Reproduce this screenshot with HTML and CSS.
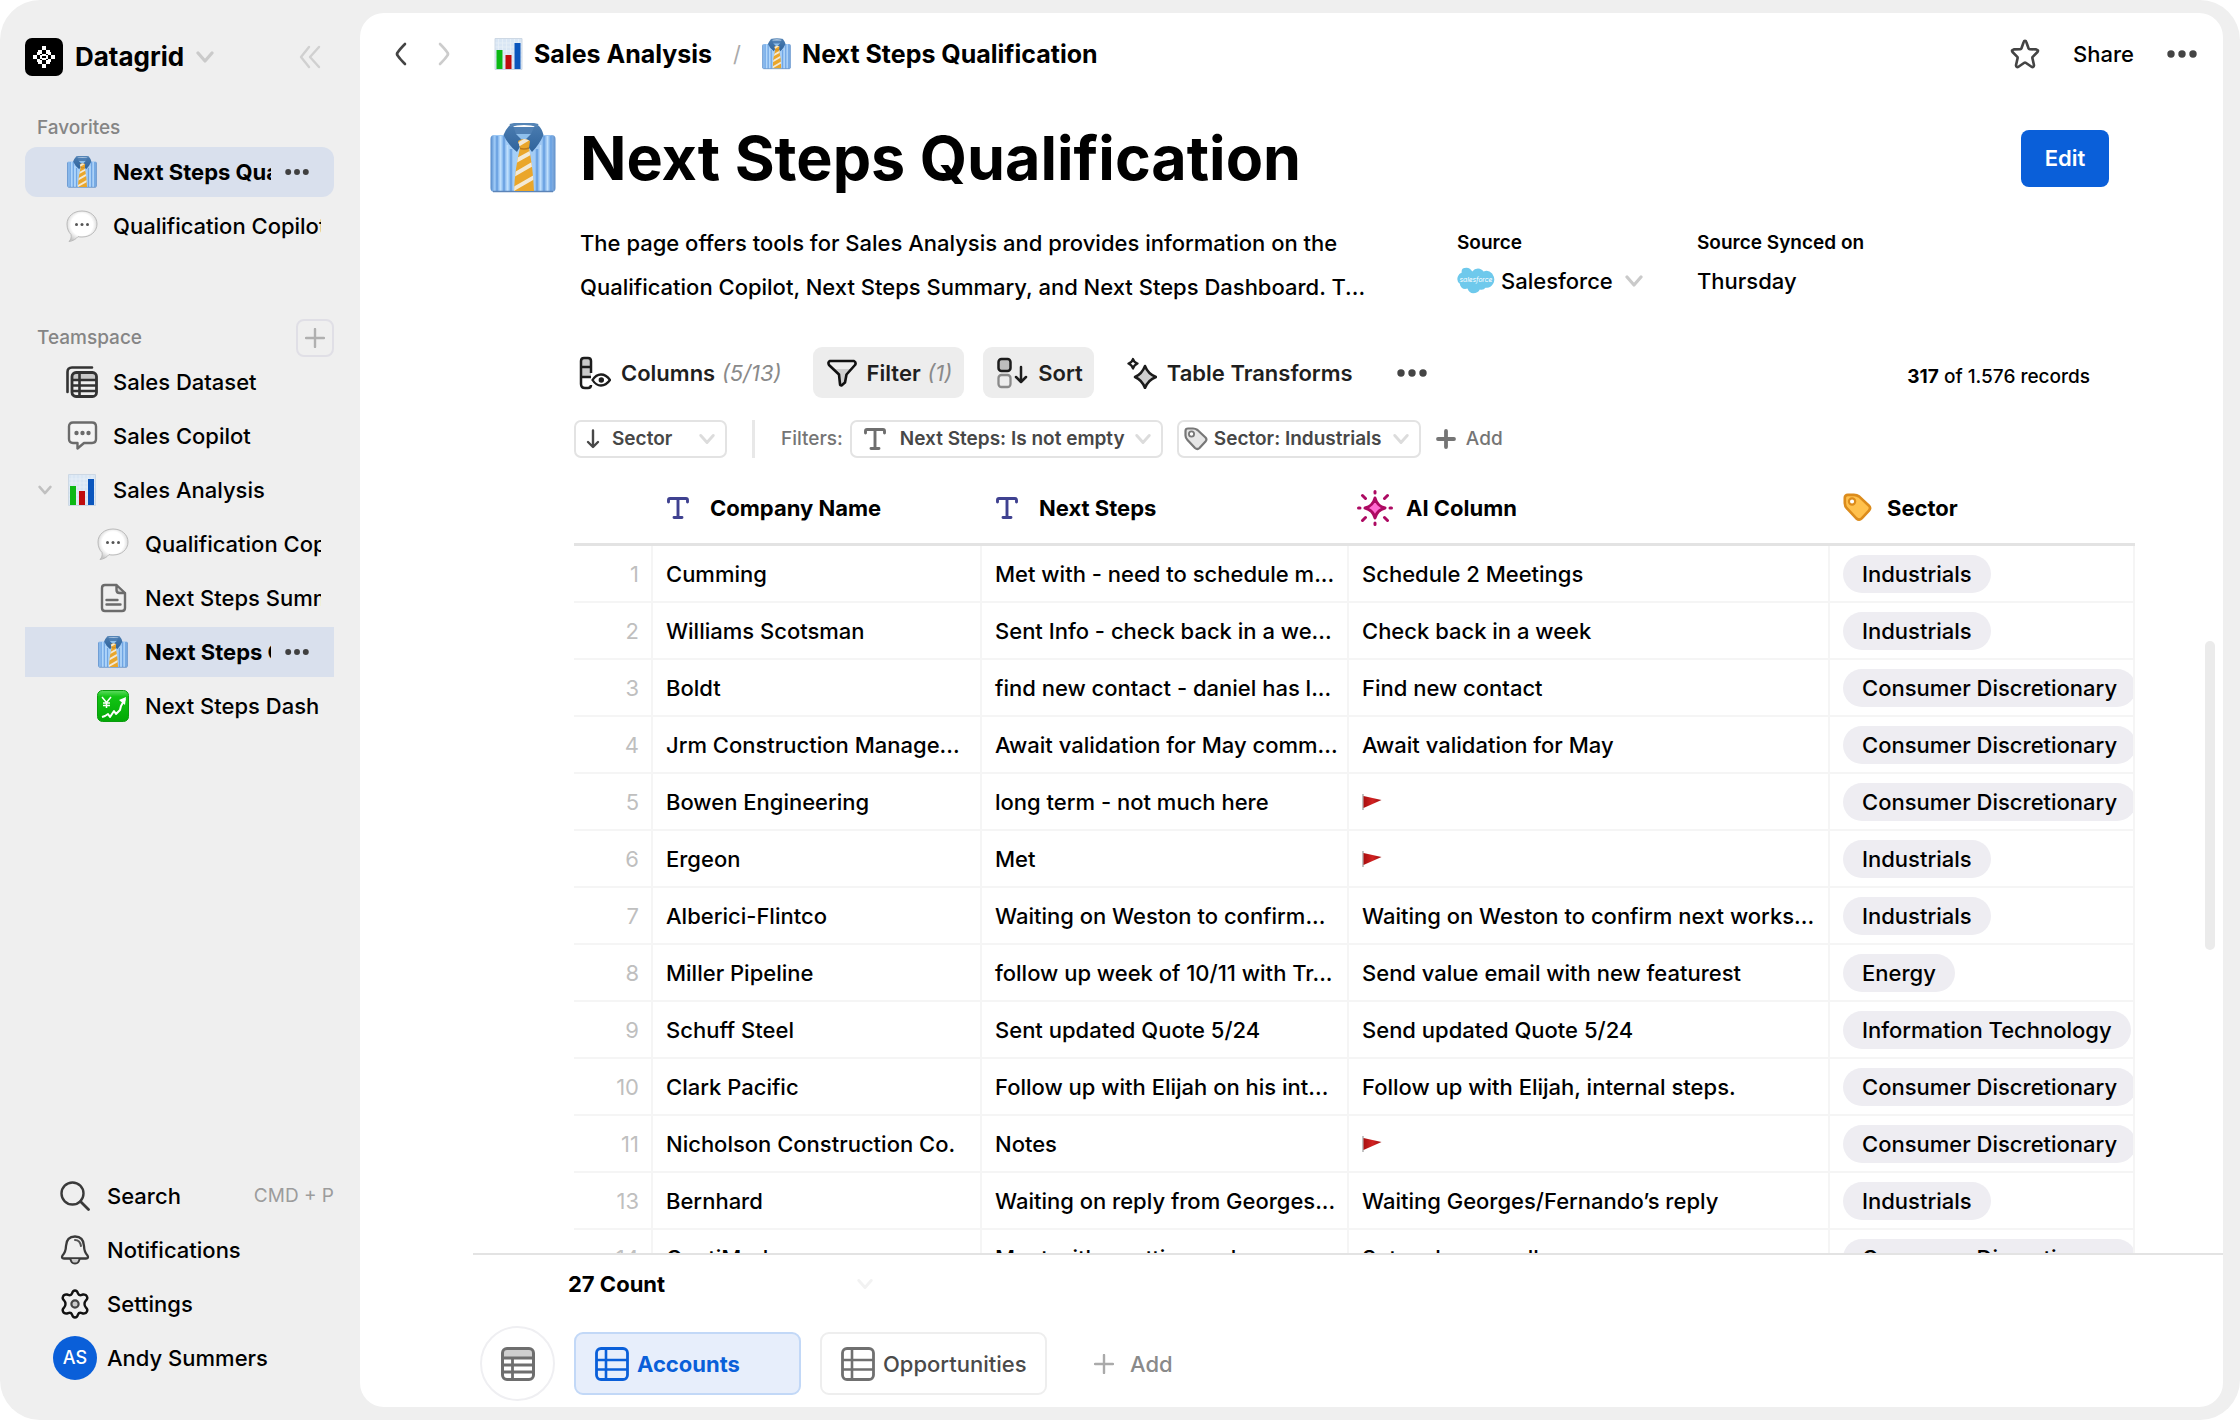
FILE: index.html
```html
<!DOCTYPE html>
<html lang="en">
<head>
<meta charset="utf-8">
<title>Next Steps Qualification – Datagrid</title>
<link rel="stylesheet" href="styles.css">
</head>
<body>
<svg class="sprite" aria-hidden="true">
  <defs>
    <linearGradient id="cloth" x1="0" x2="1" y1="0" y2="0"><stop offset="0" stop-color="#4f86c8"/><stop offset=".06" stop-color="#9cc8f5"/><stop offset=".5" stop-color="#a9d2f9"/><stop offset=".92" stop-color="#98c2f0"/><stop offset="1" stop-color="#5f8fc9"/></linearGradient>
    <linearGradient id="collar" x1="0" x2="0" y1="0" y2="1"><stop offset="0" stop-color="#4a7cb0"/><stop offset="1" stop-color="#2f639c"/></linearGradient>
    <radialGradient id="bubble" cx=".5" cy=".45" r=".6"><stop offset=".6" stop-color="#fff"/><stop offset="1" stop-color="#c4c4c4"/></radialGradient>
    <linearGradient id="money" x1="0" x2="0" y1="0" y2="1"><stop offset="0" stop-color="#5fdc62"/><stop offset=".2" stop-color="#12c414"/><stop offset="1" stop-color="#02a806"/></linearGradient>
    <linearGradient id="flag" x1="0" x2="1" y1="0" y2="0"><stop offset="0" stop-color="#a80f0f"/><stop offset=".5" stop-color="#d02222"/><stop offset="1" stop-color="#a01010"/></linearGradient>
    <clipPath id="tie-shape"><path d="M28 18q6-4 12 0l-1 7q4 20 5 43H24q1-23 6-43z"/></clipPath>
  </defs>
  <symbol id="shirt" viewBox="0 0 66 70">
    <rect x=".5" y="12" width="65" height="57" rx="4" fill="url(#cloth)"/>
    <path d="M7 13v55M14 13v55M21 26v42M47 26v42M54 13v55M61 13v55" stroke="#6fa5e3" stroke-width="2.600"/>
    <path d="M10.500 13v55M57.500 13v55M50.500 22v46M17.500 22v46" stroke="#bfdffc" stroke-width="1.600"/>
    <path d="M3 68.500h60" stroke="#5b84b8" stroke-width="1.400"/>
    <path d="M22 4h24l-6 16H28z" fill="#8fc0ec"/>
    <path d="M22 4h24l-3 7H25z" fill="#4f80b4"/>
    <path d="M19 3q2-2 4-1l3 9 7 7-6 11Q18 22 13.500 12 16 6 19 3zM49 3q-2-2-4-1l-4 9-7 7 8 11q7-7 11.500-17Q52 6 49 3z" fill="url(#collar)"/>
    <path d="M20 2.500Q34-1.500 48 2.500" stroke="#5585b6" stroke-width="3" fill="none"/>
    <g clip-path="url(#tie-shape)">
      <path d="M20 14h28v56H20z" fill="#eaa62a"/>
      <path d="M26 23l15-9M22 40l20-11M20 54l26-15M20 68l28-16" stroke="#f2e9d6" stroke-width="4"/>
      <path d="M29 25q5 2 10 0" stroke="#b9791b" stroke-width="1.400" fill="none"/>
    </g>
  </symbol>
  <symbol id="chart" viewBox="0 0 28 32">
    <path d="M.5.5h27v31H.5z" fill="#d9e6f4" stroke="#cdd8e4"/>
    <path d="M4 1v30M8 1v30M12 1v30M16 1v30M20 1v30M24 1v30M1 5h26M1 9h26M1 13h26M1 17h26M1 21h26M1 25h26" stroke="#e8f0f8" stroke-width=".8"/>
    <path d="M2 12h6v19H2z" fill="#0cb814"/><path d="M11 17h6v14h-6z" fill="#c00d0d"/><path d="M20 5h6v26h-6z" fill="#0b56bd"/>
  </symbol>
  <symbol id="chat-bubble" viewBox="0 0 32 32">
    <path d="M16 1c8.500 0 15 5.500 15 13S24.500 27 16 27c-1.500 0-3 0-4-.4C10 29 7 31 3 31.500c2-2 2.600-4.500 2-7C2.500 22 1 18.500 1 14 1 6.500 7.500 1 16 1z" fill="url(#bubble)" stroke="#bababa"/>
    <circle cx="10.500" cy="14.500" r="1.500" fill="#555"/><circle cx="16" cy="14.500" r="1.500" fill="#555"/><circle cx="21.500" cy="14.500" r="1.500" fill="#555"/>
  </symbol>
  <symbol id="yen-chart" viewBox="0 0 32 32">
    <rect x=".5" y=".5" width="31" height="31" rx="5" fill="url(#money)" stroke="#0a9c0d"/>
    <path d="M5 7l4.500 5.500L14 7M9.500 12v6M6 13h7M6 15.500h7" fill="none" stroke="#fff" stroke-width="1.500"/>
    <path d="M5 27l3-1 3-2 2 3 4-6 2 3 4-4 1-4 4-7" fill="none" stroke="#fff" stroke-width="2" stroke-linejoin="round"/><path d="M22 10l7-3-1 8z" fill="#fff"/>
  </symbol>
  <symbol id="logo" viewBox="0 0 38 38">
    <rect width="38" height="38" rx="7" fill="#000"/>
    <path d="M17 8h4v4h-4zM13 12h4v4h-4zM21 12h4v4h-4zM17 16h4v2h-4zM8 17h4v4H8zM26 17h4v4h-4zM12 14h3v3h-3zM23 14h3v3h-3zM12 21h3v3h-3zM23 21h3v3h-3zM15 17h2v4h-2zM21 17h2v4h-2zM17 20h4v2h-4zM13 22h4v4h-4zM21 22h4v4h-4zM17 26h4v4h-4z" fill="#fff"/>
  </symbol>
  <symbol id="chev-down" viewBox="0 0 18 12"><path d="M2 2l7 8 7-8" fill="none" stroke="currentColor" stroke-width="3.200" stroke-linecap="round" stroke-linejoin="round"/></symbol>
  <symbol id="collapse" viewBox="0 0 22 24"><path d="M10 2L2 12l8 10M20 2l-9 10 9 10" fill="none" stroke="currentColor" stroke-width="2.400" stroke-linecap="round" stroke-linejoin="round"/></symbol>
  <symbol id="chev-left" viewBox="0 0 14 24"><path d="M11 2Q6 7 4 10q-2 2 0 4 2 3 7 8" fill="none" stroke="currentColor" stroke-width="2.600" stroke-linecap="round"/></symbol>
  <symbol id="chev-right" viewBox="0 0 14 24"><path d="M3 2q5 5 7 8 2 2 0 4-2 3-7 8" fill="none" stroke="currentColor" stroke-width="2.600" stroke-linecap="round"/></symbol>
  <symbol id="dots" viewBox="0 0 30 8"><circle cx="4" cy="4" r="3.700"/><circle cx="15" cy="4" r="3.700"/><circle cx="26" cy="4" r="3.700"/></symbol>
  <symbol id="plus" viewBox="0 0 20 20"><path d="M10 1v18M1 10h18" stroke="currentColor" stroke-width="2.400" stroke-linecap="round"/></symbol>
  <symbol id="plus-bold" viewBox="0 0 20 20"><path d="M10 2v16M2 10h16" stroke="currentColor" stroke-width="3.800" stroke-linecap="round"/></symbol>
  <symbol id="dataset" viewBox="0 0 32 32"><path d="M1.500 26V6q0-4.500 4.500-4.500h20" fill="none" stroke="#333" stroke-width="2.600" stroke-linecap="round"/><path d="M6 11q0-4 4-4h16q4 0 4 4v3H6z" fill="#c9c9c9"/><rect x="6" y="6.500" width="24.500" height="24" rx="4" fill="none" stroke="#333" stroke-width="2.800"/><path d="M6 14h24M6 19.500h24M6 25h24M13.500 7v23" stroke="#333" stroke-width="2.600"/></symbol>
  <symbol id="chat" viewBox="0 0 32 32"><path d="M7 2.500h19q4 0 4 4V19q0 4-4 4H18l-6.500 5.500V23H7q-4 0-4-4V6.500q0-4 4-4z" fill="#f4f4f4" stroke="#6b6b6b" stroke-width="2.400" stroke-linejoin="round"/><circle cx="10.500" cy="13" r="2.200" fill="#6b6b6b"/><circle cx="16.500" cy="13" r="2.200" fill="#6b6b6b"/><circle cx="22.500" cy="13" r="2.200" fill="#6b6b6b"/></symbol>
  <symbol id="doc" viewBox="0 0 32 32"><path d="M19.500 3v5q0 3 3 3H28z" fill="#d4d4d4"/><path d="M8 3h11.500L28 11v15q0 3-3 3H8q-3 0-3-3V6q0-3 3-3zM19.500 3v5q0 3 3 3H28M9.500 18h11M9.500 22.500h14" fill="none" stroke="#6b6b6b" stroke-width="2.400" stroke-linejoin="round" stroke-linecap="round"/></symbol>
  <symbol id="search" viewBox="0 0 30 30"><circle cx="12.500" cy="12.500" r="11" fill="none" stroke="#3a3a3a" stroke-width="2.400"/><path d="M20.500 20.500l8 8" stroke="#3a3a3a" stroke-width="2.800" stroke-linecap="round"/></symbol>
  <symbol id="bell" viewBox="0 0 30 30"><path d="M15 1.500q8.500 0 9 9.500.2 6 3.500 9.500 1.500 3-1.500 3H4q-3 0-1.500-3Q5.800 17 6 11q.5-9.500 9-9.500z" fill="none" stroke="#3a3a3a" stroke-width="2.300" stroke-linejoin="round"/><path d="M15 5q5 0 6 6" fill="none" stroke="#555" stroke-width="2" stroke-linecap="round"/><path d="M10.500 24q.5 4.500 4.500 4.500t4.500-4.500" fill="#c9c9c9" stroke="#3a3a3a" stroke-width="2"/></symbol>
  <symbol id="gear" viewBox="0 0 30 30"><path d="M12 4.500q.8-3 3-3t3 3q.8 2 3 1.600l2-.6q3-.4 4 2 1 2-1 3.800-1.500 1.700-1.500 3.700t1.500 3.700q2 1.800 1 3.800-1 2.400-4 2l-2-.6q-2.200-.4-3 1.600-.8 3-3 3t-3-3q-.8-2-3-1.600l-2 .6q-3 .4-4-2-1-2 1-3.800Q5.500 17 5.500 15T4 11.300q-2-1.800-1-3.800 1-2.400 4-2l2 .6q2.200.4 3-1.600z" fill="none" stroke="#111" stroke-width="2.400" stroke-linejoin="round"/><circle cx="15" cy="15" r="3.600" fill="#ccc" stroke="#444" stroke-width="2.200"/></symbol>
  <symbol id="star" viewBox="0 0 30 30"><path d="M15 1.800q1 0 1.400 1.400l2.200 6.300q.3.700 1 .7l6.700.2q2.600.6 1.200 2.600l-4.800 4.800q-.5.600-.3 1.300l1.600 7.200q-.2 2.500-2.500 1.500l-5.800-4q-.7-.5-1.400 0l-5.800 4q-2.300 1-2.500-1.500l1.600-7.200q.2-.7-.3-1.300L2.500 13q-1.400-2 1.200-2.600l6.700-.2q.7 0 1-.7l2.200-6.300Q14 1.800 15 1.800z" fill="none" stroke="#444" stroke-width="2.600" stroke-linejoin="round"/></symbol>
  <symbol id="salesforce" viewBox="0 0 40 28"><path d="M16 4q3-4 8-3 3 1 4 3 5-2 9 2 4 6 1 11-3 5-8 4-2 3-6 2-2 4-7 4-4 0-6-5-4 1-6-1-2-2-2-4-4-3-2-8 1-3 4-4Q4 0 10 0q4 0 6 4z" fill="#6ec9ec"/><text class="sf-word" x="20" y="15" text-anchor="middle">salesforce</text></symbol>
  <symbol id="columns" viewBox="0 0 32 34"><path d="M2 11h10v11H2z" fill="#c9c9c9"/><path d="M2 5q0-3 3-3h4q3 0 3 3v5H2z" fill="#c9c9c9"/><path d="M12 17V5q0-3-3-3H5Q2 2 2 5v23q0 4 4 4h3q3 0 3-3M2 11h10M2 21h10" fill="none" stroke="#1c1c1c" stroke-width="2.500"/><path d="M13.500 24q3.500-5.500 8.500-5.500t9 5.500q-4 5.500-9 5.500t-8.500-5.500z" fill="#fff" stroke="#1c1c1c" stroke-width="2.300"/><circle cx="22.300" cy="24" r="2.700" fill="#1c1c1c"/></symbol>
  <symbol id="filter" viewBox="0 0 30 28"><path d="M6 10h18l-5 6-2 8-3 1-1-9z" fill="#cfcfcf"/><path d="M3 2h24q2.500 1.500 1 4l-8.500 9.500-1.500 8-3.500 3q-1.500 0-1.500-1.500l-1-9.500L2 6q-1.500-3 1-4z" fill="none" stroke="#111" stroke-width="2.600" stroke-linejoin="round"/></symbol>
  <symbol id="sort" viewBox="0 0 31 32"><rect x="1.500" y="2" width="12" height="12" rx="3" fill="#bdbdbd" stroke="#1c1c1c" stroke-width="2.500"/><rect x="1.500" y="18" width="12" height="12" rx="3" fill="none" stroke="#8a8a8a" stroke-width="2.300"/><path d="M24 10v14M19 20l5 5 5-5" fill="none" stroke="#1c1c1c" stroke-width="2.500" stroke-linecap="round" stroke-linejoin="round"/></symbol>
  <symbol id="sparkle" viewBox="0 0 30 32"><path d="M18 9q3 8 11 11-8 3-11 11-3-8-10-11 7-3 10-11z" fill="#cfcfcf" stroke="#1c1c1c" stroke-width="2.500" stroke-linejoin="round"/><path d="M6 2q1 3.500 4.500 4.500Q7 8 6 11.500 5 8 1.500 6.500 5 5.500 6 2z" fill="#fff" stroke="#1c1c1c" stroke-width="2.300" stroke-linejoin="round"/></symbol>
  <symbol id="arrow-down" viewBox="0 0 14 20"><path d="M7 1.500v16M2 13l5 5 5-5" fill="none" stroke="currentColor" stroke-width="2.400" stroke-linecap="round" stroke-linejoin="round"/></symbol>
  <symbol id="text-type" viewBox="0 0 22 22"><path d="M1.500 5V3q0-1.500 1.500-1.500h16q1.500 0 1.500 1.500v2M11 2v18M7 20.500h8" fill="none" stroke="currentColor" stroke-width="2.900" stroke-linecap="round"/></symbol>
  <symbol id="tag" viewBox="0 0 24 24"><path d="M4 1.500h5q2.500 0 4.500 1.500l8 7.500q1.800 2 0 4l-6 6.500q-2 2-4.500 0l-7.500-8Q1.500 11 1.500 8.500V4q0-2.500 2.500-2.500z" fill="var(--tag-fill)" stroke="var(--tag-line)" stroke-width="2.200" stroke-linejoin="round"/><circle cx="7.500" cy="7" r="2.600" fill="#fff" stroke="var(--tag-line)" stroke-width="1.800"/></symbol>
  <symbol id="ai" viewBox="0 0 36 36"><path d="M18 8q2 8 10 10-8 2-10 10-2-8-10-10 8-2 10-10z" fill="#ff6bd0" stroke="#ad0a62" stroke-width="3" stroke-linejoin="round"/><path d="M18 1.500v1.500M18 33v1.500M1.500 18H3M33 18h1.500M5.500 5.500l3 3M30.500 5.500l-3 3M5.500 30.500l3-3M30.500 30.500l-3-3" stroke="#ad0a62" stroke-width="3" stroke-linecap="round"/></symbol>
  <symbol id="table-grid" viewBox="0 0 34 34"><path d="M2 13h30M2 22.500h30M11 2v30" stroke="currentColor" stroke-width="2.600"/><rect x="1.500" y="1.500" width="31" height="31" rx="4.500" fill="none" stroke="currentColor" stroke-width="2.800"/></symbol>
  <symbol id="table-list" viewBox="0 0 34 34"><path d="M3 3h28v7H3z" fill="#cfcfcf"/><path d="M2 11h30M2 18h30M2 25h30M11.500 11v21" stroke="currentColor" stroke-width="2.800"/><rect x="1.500" y="1.500" width="31" height="31" rx="4.500" fill="none" stroke="currentColor" stroke-width="3"/></symbol>
  <symbol id="red-flag" viewBox="0 0 20 18"><path d="M1 1v16" stroke="#9a9a9a" stroke-width="1.200"/><path d="M1.500 3q9 2 18 4-9 4-18 8z" fill="url(#flag)"/></symbol>
</svg>

<div class="app">
  <aside class="sidebar">
    <div class="brand">
      <svg class="brand-logo"><use href="#logo"/></svg>
      <button class="brand-name" type="button">Datagrid <svg class="chev"><use href="#chev-down"/></svg></button>
      <button class="collapse" type="button" aria-label="Collapse sidebar"><svg><use href="#collapse"/></svg></button>
    </div>

    <nav class="favorites">
      <h2 class="group-title">Favorites</h2>
      <div class="nav-item rounded selected">
        <svg class="nav-icon"><use href="#shirt"/></svg>
        <a href="#">Next Steps Qualification</a>
        <button class="more" type="button" aria-label="More"><svg><use href="#dots"/></svg></button>
      </div>
      <div class="nav-item">
        <svg class="nav-icon"><use href="#chat-bubble"/></svg>
        <a href="#">Qualification Copilot</a>
      </div>
    </nav>

    <nav class="teamspace">
      <div class="group-head">
        <h2 class="group-title">Teamspace</h2>
        <button class="add-space" type="button" aria-label="Add"><svg><use href="#plus"/></svg></button>
      </div>
      <div class="nav-item"><svg class="nav-icon"><use href="#dataset"/></svg><a href="#">Sales Dataset</a></div>
      <div class="nav-item"><svg class="nav-icon"><use href="#chat"/></svg><a href="#">Sales Copilot</a></div>
      <div class="nav-item open"><svg class="twist"><use href="#chev-down"/></svg><svg class="nav-icon"><use href="#chart"/></svg><a href="#">Sales Analysis</a></div>
      <div class="nav-item child"><svg class="nav-icon"><use href="#chat-bubble"/></svg><a href="#">Qualification Copilot</a></div>
      <div class="nav-item child"><svg class="nav-icon"><use href="#doc"/></svg><a href="#">Next Steps Summary</a></div>
      <div class="nav-item child selected">
        <svg class="nav-icon"><use href="#shirt"/></svg>
        <a href="#">Next Steps Qualification</a>
        <button class="more" type="button" aria-label="More"><svg><use href="#dots"/></svg></button>
      </div>
      <div class="nav-item child"><svg class="nav-icon"><use href="#yen-chart"/></svg><a href="#">Next Steps Dash</a></div>
    </nav>

    <nav class="utility">
      <a href="#"><svg><use href="#search"/></svg>Search<kbd>CMD + P</kbd></a>
      <a href="#"><svg><use href="#bell"/></svg>Notifications</a>
      <a href="#"><svg><use href="#gear"/></svg>Settings</a>
      <a href="#"><span class="avatar">AS</span>Andy Summers</a>
    </nav>
  </aside>

  <main class="panel">
    <header class="topbar">
      <div class="history">
        <button type="button" aria-label="Back"><svg><use href="#chev-left"/></svg></button>
        <button class="disabled" type="button" aria-label="Forward"><svg><use href="#chev-right"/></svg></button>
      </div>
      <nav class="crumbs">
        <a href="#"><svg><use href="#chart"/></svg>Sales Analysis</a>
        <span class="slash">/</span>
        <a href="#"><svg><use href="#shirt"/></svg>Next Steps Qualification</a>
      </nav>
      <div class="top-actions">
        <button type="button" aria-label="Favorite"><svg class="star"><use href="#star"/></svg></button>
        <button type="button">Share</button>
        <button type="button" aria-label="More"><svg class="dots"><use href="#dots"/></svg></button>
      </div>
    </header>

    <div class="title-row">
      <svg class="title-icon"><use href="#shirt"/></svg>
      <h1>Next Steps Qualification</h1>
      <button class="edit" type="button">Edit</button>
    </div>

    <div class="about">
      <p>The page offers tools for Sales Analysis and provides information on the<br>Qualification Copilot, Next Steps Summary, and Next Steps Dashboard. T...</p>
      <dl class="source">
        <dt>Source</dt>
        <dd><button type="button"><svg class="sf"><use href="#salesforce"/></svg>Salesforce<svg class="chev"><use href="#chev-down"/></svg></button></dd>
      </dl>
      <dl>
        <dt>Source Synced on</dt>
        <dd>Thursday</dd>
      </dl>
    </div>

    <div class="toolbar">
      <button class="tool" type="button"><svg class="i-columns"><use href="#columns"/></svg>Columns <em>(5/13)</em></button>
      <button class="tool on" type="button"><svg class="i-filter"><use href="#filter"/></svg>Filter <em>(1)</em></button>
      <button class="tool on" type="button"><svg class="i-sort"><use href="#sort"/></svg>Sort</button>
      <button class="tool transforms" type="button"><svg class="i-sparkle"><use href="#sparkle"/></svg>Table Transforms</button>
      <button class="tool-more" type="button" aria-label="More"><svg class="dots"><use href="#dots"/></svg></button>
      <p class="records"><b>317</b> of 1.576 records</p>
    </div>

    <div class="filters">
      <button class="chip sort-chip" type="button"><svg class="i-arrow"><use href="#arrow-down"/></svg><span>Sector</span><svg class="chev"><use href="#chev-down"/></svg></button>
      <span class="divider"></span>
      <span class="filters-label">Filters:</span>
      <button class="chip text-chip" type="button"><svg class="i-type"><use href="#text-type"/></svg><span>Next Steps: Is not empty</span><svg class="chev"><use href="#chev-down"/></svg></button>
      <button class="chip tag-chip" type="button"><svg class="i-tag"><use href="#tag"/></svg><span>Sector: Industrials</span><svg class="chev"><use href="#chev-down"/></svg></button>
      <button class="add-filter" type="button"><svg><use href="#plus-bold"/></svg>Add</button>
    </div>

    <div class="table-area">
      <table>
        <colgroup><col class="c-num"><col class="c-company"><col class="c-next"><col class="c-ai"><col></colgroup>
        <thead>
          <tr>
            <th></th>
            <th><span class="head"><svg class="h-type"><use href="#text-type"/></svg>Company Name</span></th>
            <th><span class="head"><svg class="h-type"><use href="#text-type"/></svg>Next Steps</span></th>
            <th><span class="head head-ai"><svg class="h-ai"><use href="#ai"/></svg>AI Column</span></th>
            <th><span class="head head-tag"><svg class="h-tag"><use href="#tag"/></svg>Sector</span></th>
          </tr>
        </thead>
        <tbody>
          <tr><td>1</td><td>Cumming</td><td>Met with - need to schedule m...</td><td>Schedule 2 Meetings</td><td><span class="pill">Industrials</span></td></tr>
          <tr><td>2</td><td>Williams Scotsman</td><td>Sent Info - check back in a we...</td><td>Check back in a week</td><td><span class="pill">Industrials</span></td></tr>
          <tr><td>3</td><td>Boldt</td><td>find new contact - daniel has l...</td><td>Find new contact</td><td><span class="pill">Consumer Discretionary</span></td></tr>
          <tr><td>4</td><td>Jrm Construction Manage...</td><td>Await validation for May comm...</td><td>Await validation for May</td><td><span class="pill">Consumer Discretionary</span></td></tr>
          <tr><td>5</td><td>Bowen Engineering</td><td>long term - not much here</td><td><svg class="flag"><use href="#red-flag"/></svg></td><td><span class="pill">Consumer Discretionary</span></td></tr>
          <tr><td>6</td><td>Ergeon</td><td>Met</td><td><svg class="flag"><use href="#red-flag"/></svg></td><td><span class="pill">Industrials</span></td></tr>
          <tr><td>7</td><td>Alberici-Flintco</td><td>Waiting on Weston to confirm...</td><td>Waiting on Weston to confirm next works...</td><td><span class="pill">Industrials</span></td></tr>
          <tr><td>8</td><td>Miller Pipeline</td><td>follow up week of 10/11 with Tr...</td><td>Send value email with new featurest</td><td><span class="pill">Energy</span></td></tr>
          <tr><td>9</td><td>Schuff Steel</td><td>Sent updated Quote 5/24</td><td>Send updated Quote 5/24</td><td><span class="pill">Information Technology</span></td></tr>
          <tr><td>10</td><td>Clark Pacific</td><td>Follow up with Elijah on his int...</td><td>Follow up with Elijah, internal steps.</td><td><span class="pill">Consumer Discretionary</span></td></tr>
          <tr><td>11</td><td>Nicholson Construction Co.</td><td>Notes</td><td><svg class="flag"><use href="#red-flag"/></svg></td><td><span class="pill">Consumer Discretionary</span></td></tr>
          <tr><td>13</td><td>Bernhard</td><td>Waiting on reply from Georges...</td><td>Waiting Georges/Fernando’s reply</td><td><span class="pill">Industrials</span></td></tr>
          <tr><td>14</td><td>CentiMark</td><td>Meet with - setting up larger c...</td><td>Set up larger call</td><td><span class="pill">Consumer Discretionary</span></td></tr>
        </tbody>
      </table>
    </div>

    <footer class="bottom">
      <button class="count" type="button">27 Count<svg><use href="#chev-down"/></svg></button>
      <div class="tabs">
        <button class="all-tables" type="button" aria-label="All tables"><svg><use href="#table-list"/></svg></button>
        <button class="tab active" type="button"><svg><use href="#table-grid"/></svg>Accounts</button>
        <button class="tab" type="button"><svg><use href="#table-grid"/></svg>Opportunities</button>
        <button class="add-tab" type="button"><svg><use href="#plus"/></svg>Add</button>
      </div>
    </footer>
    <span class="scroll-thumb"></span>
  </main>
</div>
</body>
</html>
```
FILE: styles.css
```css
* { box-sizing: border-box; }
html { background: #fff; }
body { margin: 0; font: 500 22px/28px Inter, "Liberation Sans", sans-serif; color: #000; }
h1, h2, p, dl, dd { margin: 0; }
a { color: inherit; text-decoration: none; }
button { font: inherit; color: inherit; background: none; border: 0; padding: 0; margin: 0; display: flex; align-items: center; white-space: nowrap; }
svg { flex: none; display: block; fill: currentColor; }
.sprite { position: absolute; width: 0; height: 0; }

.app { display: flex; height: 100vh; padding: 13px 17px 13px 0; background: #efefef; border-radius: 40px; }

/* Sidebar */
.sidebar { display: flex; flex-direction: column; width: 360px; flex: none; padding: 25px 26px 24px 25px; }
.brand { display: flex; align-items: center; height: 38px; }
.brand-logo { width: 38px; height: 38px; }
.brand-name { margin-left: 12px; gap: 12px; font-size: 26px; font-weight: 700; }
.chev { width: 18px; height: 12px; color: #cacaca; }
.collapse { margin: 0 13px 0 auto; color: #d0d0d0; }
.collapse svg { width: 22px; height: 24px; }
.favorites { margin-top: 38px; }
.group-title { padding-left: 12px; font-size: 19px; line-height: 28px; font-weight: 500; color: #858585; }
.favorites .group-title { margin-bottom: 5px; }
.nav-item { display: flex; align-items: center; height: 50px; margin-bottom: 4px; padding: 0 13px 0 41px; }
.nav-item.child { padding-left: 72px; }
.nav-item.open { padding-left: 13px; }
.nav-item .twist { width: 14px; height: 10px; margin-right: 14px; color: #c0c0c0; }
.nav-icon { width: 32px; height: 32px; margin-right: 15px; }
.child .nav-icon { margin-right: 16px; }
.nav-item a { flex: 1; min-width: 0; overflow: hidden; white-space: nowrap; }
.selected { background: #d9e0ed; font-weight: 700; }
.rounded { border-radius: 12px; }
.more { margin-left: 14px; margin-right: 12px; color: #404040; }
.more svg { width: 24px; height: 8px; }
.teamspace { margin-top: 64px; }
.group-head { display: flex; align-items: center; justify-content: space-between; height: 38px; }
.add-space { width: 38px; height: 38px; justify-content: center; border: 2px solid #e0dfe6; border-radius: 8px; color: #b0b0b0; }
.add-space svg { width: 20px; height: 20px; }
.utility { margin-top: auto; }
.utility a { display: flex; align-items: center; height: 50px; margin-top: 4px; padding-left: 35px; }
.utility svg { width: 30px; height: 30px; margin-right: 17px; }
.utility kbd { margin-left: auto; font: 400 19px/28px Inter, sans-serif; color: #9c9c9c; }
.avatar { display: grid; place-items: center; width: 44px; height: 44px; margin: 0 10px 0 -7px; border-radius: 50%; background: #0a5fd9; color: #fff; font-size: 18px; }

/* Main panel */
.panel { position: relative; display: flex; flex-direction: column; flex: 1; min-width: 0; background: #fff; border-radius: 24px; }
.topbar { display: flex; align-items: center; height: 82px; padding: 0 26px 0 34px; }
.history { display: flex; gap: 29px; color: #444; }
.history svg { width: 14px; height: 24px; }
.history .disabled { color: #ccc; }
.crumbs { display: flex; align-items: center; margin-left: 43px; font-size: 25px; font-weight: 700; }
.crumbs a { display: flex; align-items: center; gap: 11px; }
.crumbs svg { width: 29px; height: 32px; }
.slash { width: 50px; text-align: center; font-weight: 400; font-size: 22px; color: #aaa; }
.top-actions { display: flex; align-items: center; gap: 33px; margin-left: auto; }
.star { width: 30px; height: 30px; }
.dots { width: 30px; height: 8px; color: #444; }
.title-row { display: flex; align-items: center; height: 70px; margin-top: 28px; padding: 0 114px 0 130px; }
.title-icon { width: 66px; height: 70px; }
h1 { margin-left: 24px; font-size: 61px; line-height: 70px; font-weight: 700; }
.edit { width: 88px; height: 57px; margin-left: auto; justify-content: center; border-radius: 8px; background: #0a5fd9; color: #fff; font-weight: 600; }
.about { display: flex; margin-top: 28px; padding-left: 220px; }
.about p { width: 877px; line-height: 44px; white-space: nowrap; }
.about dl { width: 240px; padding-top: 8px; }
.about dt { font-size: 19px; line-height: 28px; font-weight: 600; }
.about dd { margin-top: 10px; }
.about button { gap: 6px; }
.about .chev { margin-left: 6px; }
.sf { width: 38px; height: 28px; }
.sf-word { font: italic 400 7px Inter, sans-serif; fill: #fff; }

.toolbar { display: flex; align-items: center; height: 51px; margin-top: 38px; padding: 0 133px 0 214px; font-weight: 600; color: #1f1f1f; }
.tool { height: 51px; padding: 0 11px 0 14px; border-radius: 9px; white-space: pre; }
.tool em { padding: 0 1px; font-weight: 400; color: #8a8a8a; }
.tool.on { background: #ededed; margin-left: 19px; }
.tool svg { margin-right: 10px; }
.i-columns { width: 32px; height: 34px; margin-left: -9px; }
.i-filter { width: 30px; height: 28px; }
.i-sort { width: 31px; height: 32px; }
.transforms { margin-left: 19px; }
.i-sparkle { width: 30px; height: 32px; }
.tool-more { margin-left: 33px; }
.records { align-self: flex-end; margin: 0 0 7px auto; font-size: 19px; font-weight: 500; color: #000; }
.filters { display: flex; align-items: center; height: 38px; margin-top: 22px; padding-left: 214px; font-size: 19px; font-weight: 600; color: #474747; }
.chip { height: 38px; padding: 0 10px; border: 2px solid #e3e3e3; border-radius: 7px; }
.chip .chev { margin-left: auto; width: 16px; color: #dcdcdc; }
.sort-chip { width: 153px; }
.text-chip { width: 313px; }
.tag-chip { width: 244px; margin-left: 14px; padding-left: 5px; }
.i-arrow { width: 14px; height: 20px; margin-right: 12px; }
.i-type { width: 22px; height: 22px; margin: 0 14px 0 2px; color: #6e6e6e; }
.i-tag { width: 24px; height: 24px; margin-right: 6px; --tag-fill: #e6e6e6; --tag-line: #777; }
.divider { width: 3px; height: 38px; margin: 0 26px 0 25px; background: #e8e8e8; }
.filters-label { margin-right: 7px; font-weight: 500; color: #757575; }
.add-filter { gap: 10px; margin-left: 15px; font-weight: 500; color: #757575; }
.add-filter svg { width: 20px; height: 20px; }

/* Data table */
.table-area { flex: 1; min-height: 0; overflow: hidden; margin-left: 113px; padding: 14px 88px 0 101px; }
table { width: 100%; table-layout: fixed; border-collapse: separate; border-spacing: 0; }
.c-num { width: 79px; }
.c-company { width: 329px; }
.c-next { width: 367px; }
.c-ai { width: 481px; }
th { height: 74px; padding: 0; border-bottom: 3px solid #e3e3e3; font-weight: 700; text-align: left; }
.head { display: flex; align-items: center; gap: 21px; padding-left: 14px; }
.head-ai { gap: 13px; padding-left: 8px; }
.head-tag { gap: 15px; padding-left: 13px; }
.h-type { width: 22px; height: 22px; color: #3f4190; }
.h-ai { width: 36px; height: 36px; }
.h-tag { width: 29px; height: 29px; --tag-fill: #ffc14d; --tag-line: #dc8c1c; }
td { height: 57px; padding: 0 0 0 13px; overflow: hidden; white-space: nowrap; border-right: 2px solid #f5f5f5; border-bottom: 2px solid #f5f5f5; }
td:first-child { padding: 0 12px 0 0; text-align: right; font-weight: 400; color: #bfbfbf; }
.pill { display: inline-block; height: 38px; padding: 0 19px; border-radius: 19px; background: #eeedf2; line-height: 38px; vertical-align: middle; }
.flag { width: 20px; height: 18px; }

/* Footer */
.bottom { margin-left: 113px; height: 154px; border-top: 2px solid #e3e3e3; }
.count { height: 58px; padding-left: 95px; font-weight: 700; gap: 192px; }
.count svg { width: 16px; height: 12px; color: #f2f2f2; }
.tabs { display: flex; align-items: center; height: 75px; margin-top: 13px; padding-left: 7px; }
.all-tables { width: 75px; height: 75px; justify-content: center; border: 2px solid #efeff2; border-radius: 50%; color: #6e6e6e; }
.tabs .tab { width: 227px; height: 63px; margin-left: 19px; padding-left: 19px; gap: 8px; border: 2px solid #eee; border-radius: 9px; color: #4a4a4a; }
.tab svg, .all-tables svg { width: 34px; height: 34px; }
.tab svg { color: #707070; }
.tabs .active { border-color: #c2d8f7; background: #e7eefb; color: #0a5fd9; font-weight: 700; }
.tabs .active svg { color: inherit; }
.add-tab { gap: 16px; margin-left: 47px; color: #8a8a8a; }
.add-tab svg { width: 20px; height: 20px; color: #aaa; }
.scroll-thumb { position: absolute; top: 628px; right: 8px; width: 10px; height: 309px; border-radius: 5px; background: #ebebeb; }
```
